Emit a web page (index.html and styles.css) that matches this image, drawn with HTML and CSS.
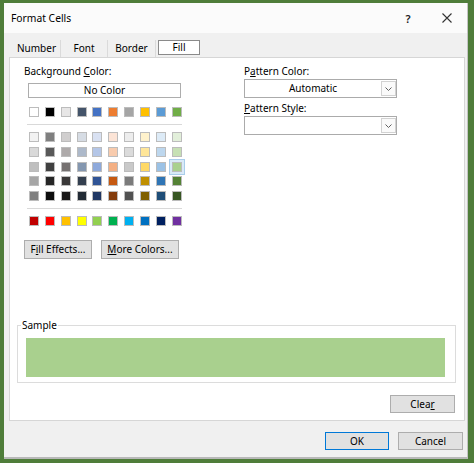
FILE: index.html
```html
<!DOCTYPE html>
<html>
<head>
<meta charset="utf-8">
<title>Format Cells</title>
<link rel="stylesheet" href="styles.css">
</head>
<body>
<div class="frame">
  <div class="dialog">
    <div class="titlebar">
      <span class="title">Format Cells</span>
      <span class="help">?</span>
      <svg class="close" width="10" height="10" viewBox="0 0 10 10"><path d="M0.5 0.5 L9.5 9.5 M9.5 0.5 L0.5 9.5" stroke="#333" stroke-width="1.1" fill="none"/></svg>
    </div>
    <div class="tabs">
      <div class="tab w48">Number</div>
      <div class="tab w47">Font</div>
      <div class="tab w48">Border</div>
      <div class="tab active">Fill</div>
    </div>
    <div class="panel">
      <div class="top">
        <div class="left">
          <div class="label">Background <u>C</u>olor:</div>
          <div class="nocolor">No Color</div>
          <div class="swrow first">
            <span class="sw" style="background:#FFFFFF"></span><span class="sw" style="background:#000000"></span><span class="sw" style="background:#E7E6E6"></span><span class="sw" style="background:#44546A"></span><span class="sw" style="background:#4472C4"></span><span class="sw" style="background:#ED7D31"></span><span class="sw" style="background:#A5A5A5"></span><span class="sw" style="background:#FFC000"></span><span class="sw" style="background:#5B9BD5"></span><span class="sw" style="background:#70AD47"></span>
          </div>
          <div class="sep"></div>
          <div class="swgrid">
            <span class="sw" style="background:#F2F2F2"></span><span class="sw" style="background:#7F7F7F"></span><span class="sw" style="background:#D0CECE"></span><span class="sw" style="background:#D6DCE4"></span><span class="sw" style="background:#D9E1F2"></span><span class="sw" style="background:#FCE4D6"></span><span class="sw" style="background:#EDEDED"></span><span class="sw" style="background:#FFF2CC"></span><span class="sw" style="background:#DDEBF7"></span><span class="sw" style="background:#E2EFDA"></span>
            <span class="sw" style="background:#D9D9D9"></span><span class="sw" style="background:#595959"></span><span class="sw" style="background:#AEAAAA"></span><span class="sw" style="background:#ADB9CA"></span><span class="sw" style="background:#B4C6E7"></span><span class="sw" style="background:#F8CBAD"></span><span class="sw" style="background:#DBDBDB"></span><span class="sw" style="background:#FFE699"></span><span class="sw" style="background:#BDD7EE"></span><span class="sw" style="background:#C6E0B4"></span>
            <span class="sw" style="background:#BFBFBF"></span><span class="sw" style="background:#404040"></span><span class="sw" style="background:#757171"></span><span class="sw" style="background:#8497B0"></span><span class="sw" style="background:#8EA9DB"></span><span class="sw" style="background:#F4B084"></span><span class="sw" style="background:#C9C9C9"></span><span class="sw" style="background:#FFD966"></span><span class="sw" style="background:#9BC2E6"></span><span class="sw sel" style="background:#A9D08E"></span>
            <span class="sw" style="background:#A6A6A6"></span><span class="sw" style="background:#262626"></span><span class="sw" style="background:#3A3838"></span><span class="sw" style="background:#333F4F"></span><span class="sw" style="background:#305496"></span><span class="sw" style="background:#C65911"></span><span class="sw" style="background:#7B7B7B"></span><span class="sw" style="background:#BF8F00"></span><span class="sw" style="background:#2F75B5"></span><span class="sw" style="background:#548235"></span>
            <span class="sw" style="background:#808080"></span><span class="sw" style="background:#0D0D0D"></span><span class="sw" style="background:#171616"></span><span class="sw" style="background:#222B35"></span><span class="sw" style="background:#203764"></span><span class="sw" style="background:#833C0C"></span><span class="sw" style="background:#525252"></span><span class="sw" style="background:#806000"></span><span class="sw" style="background:#1F4E78"></span><span class="sw" style="background:#375623"></span>
          </div>
          <div class="sep"></div>
          <div class="swrow std">
            <span class="sw" style="background:#C00000"></span><span class="sw" style="background:#FF0000"></span><span class="sw" style="background:#FFC000"></span><span class="sw" style="background:#FFFF00"></span><span class="sw" style="background:#92D050"></span><span class="sw" style="background:#00B050"></span><span class="sw" style="background:#00B0F0"></span><span class="sw" style="background:#0070C0"></span><span class="sw" style="background:#002060"></span><span class="sw" style="background:#7030A0"></span>
          </div>
          <div class="btnrow">
            <div class="btn fx">F<u>i</u>ll Effects...</div>
            <div class="btn more"><u>M</u>ore Colors...</div>
          </div>
        </div>
        <div class="right">
          <div class="label">P<u>a</u>ttern Color:</div>
          <div class="select">
            <span class="val">Automatic</span>
            <span class="arrow"><svg width="7" height="4" viewBox="0 0 7 4"><polyline points="0.5,0.5 3.5,3.5 6.5,0.5" fill="none" stroke="#606060" stroke-width="1"/></svg></span>
          </div>
          <div class="label second"><u>P</u>attern Style:</div>
          <div class="select">
            <span class="val"></span>
            <span class="arrow"><svg width="7" height="4" viewBox="0 0 7 4"><polyline points="0.5,0.5 3.5,3.5 6.5,0.5" fill="none" stroke="#606060" stroke-width="1"/></svg></span>
          </div>
        </div>
      </div>
      <fieldset class="sample">
        <legend>Sample</legend>
        <div class="fill"></div>
      </fieldset>
      <div class="clearrow">
        <div class="btn clear">Clea<u>r</u></div>
      </div>
    </div>
    <div class="footer">
      <div class="btn ok">OK</div>
      <div class="btn cancel">Cancel</div>
    </div>
  </div>
</div>
</body>
</html>
```

FILE: styles.css
```css
* { box-sizing: border-box; }
html, body { margin: 0; padding: 0; }
body {
  width: 474px;
  height: 463px;
  overflow: hidden;
  font-family: "Noto Sans", "Open Sans", sans-serif;
  font-size: 10px;
  color: #000;
}
u { text-decoration: underline; text-underline-offset: 1px; }

.frame {
  width: 474px;
  height: 463px;
  background: #4f7d3a;
  padding: 3px 6px 4px 4px;
  display: flex;
}
.dialog {
  flex: 1;
  background: #f0f0f0;
  display: flex;
  flex-direction: column;
  border-right: 1px solid #c4c4c4;
  border-bottom: 2px solid #b8b8b8;
}

.titlebar {
  height: 30px;
  flex: none;
  background: #fbfbfb;
  display: flex;
  align-items: center;
  padding: 0 15px 0 7px;
}
.title { font-size: 10.3px; color: #000; }
.help { margin-left: auto; width: 10px; text-align: center; font-size: 11px; font-weight: 600; color: #222; }
.close { margin-left: 29px; }

.tabs {
  height: 24px;
  flex: none;
  display: flex;
  align-items: flex-end;
  padding-left: 9px;
}
.tab {
  height: 17px;
  line-height: 16px;
  text-align: center;
  border-right: 1px solid #dadada;
  color: #000;
}
.w48 { width: 48px; }
.w47 { width: 47px; }
.tab.active {
  width: 42px;
  height: 15px;
  line-height: 13px;
  margin: 0 0 2px 2px;
  background: #fff;
  border: 1px solid #8a8a8a;
}

.panel {
  height: 364px;
  flex: none;
  margin: 0 2px 0 5px;
  background: #fff;
  border: 1px solid #d6d6d6;
  display: flex;
  flex-direction: column;
}
.top {
  display: flex;
  padding-left: 14px;
}
.left { width: 220px; }
.right { width: 153px; }
.label {
  margin-top: 6px;
  height: 14px;
  line-height: 14px;
}
.label.second { margin-top: 3px; }

.nocolor {
  margin: 5px 0 0 4px;
  width: 153px;
  height: 15px;
  line-height: 13px;
  border: 1px solid #adadad;
  text-align: center;
}

.swrow, .swgrid {
  display: grid;
  grid-template-columns: repeat(10, 10px);
  column-gap: 5.85px;
  margin-left: 5px;
}
.swgrid { row-gap: 4.8px; margin-top: 7px; }
.swrow.first { margin-top: 9px; }
.swrow.std { margin-top: 7px; }
.sw {
  display: block;
  width: 10px;
  height: 10px;
  border: 1px solid #bcbcbc;
}
.sw.sel {
  box-shadow: 0 0 0 2px #d9eaf8, 0 0 0 3px #a9cdea;
}
.sep {
  margin: 7px 0 0 3px;
  width: 155px;
  height: 1px;
  background: #d9d9d9;
}

.btn {
  height: 19px;
  line-height: 17px;
  text-align: center;
  background: #e1e1e1;
  border: 1px solid #adadad;
}
.btnrow {
  display: flex;
  gap: 9px;
  margin-top: 14px;
}
.fx { width: 68px; }
.more { width: 78px; }

.select {
  margin-top: 1px;
  height: 19px;
  display: flex;
  border: 1px solid #ababab;
  background: #fff;
}
.select .val {
  flex: 1;
  text-align: center;
  line-height: 17px;
}
.select .arrow {
  width: 15px;
  margin: 1px 0;
  border: 1px solid #d2d2d2;
  background: #fafafa;
  display: flex;
  align-items: center;
  justify-content: center;
}

.sample {
  margin: 59px 0 0 7px;
  width: 439px;
  padding: 0 10px 5px 8px;
  border: 1px solid #dcdcdc;
  min-inline-size: 0;
}
.sample legend {
  margin-left: -5px;
  padding: 0 1px;
  line-height: 14px;
}
.sample .fill {
  margin-top: 6px;
  height: 39px;
  background: #a9d08e;
}

.clearrow {
  display: flex;
  justify-content: flex-end;
  padding-right: 9px;
  margin-top: 12px;
}
.clear { width: 65px; height: 18px; line-height: 16px; }

.footer {
  display: flex;
  justify-content: flex-end;
  gap: 9px;
  padding: 11px 4px 0 0;
}
.ok, .cancel { height: 18px; line-height: 16px; }
.ok { width: 64px; border-color: #0078d7; }
.cancel { width: 65px; }
```
